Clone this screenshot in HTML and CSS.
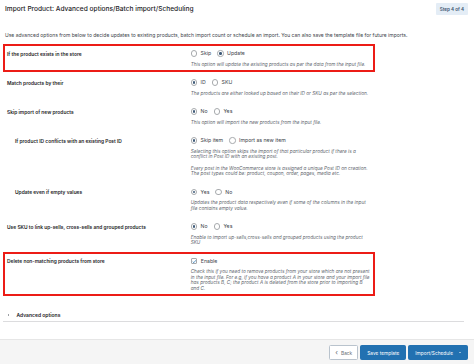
FILE: index.html
```html
<!DOCTYPE html>
<html lang="en">
<head>
  <meta charset="UTF-8">
  <meta name="viewport" content="width=device-width, initial-scale=1.0">
  <title>Import Product</title>
  <link rel="stylesheet" href="styles.css">
</head>
<body>
  <div class="page">
    <div class="head">
      <h1>Import Product: Advanced options/Batch import/Scheduling</h1>
      <span class="step">Step 4 of 4</span>
    </div>
    <p class="intro">Use advanced options from below to decide updates to existing products, batch import count or schedule an import. You can also save the template file for future imports.</p>

    <div class="row hl">
      <div class="label">If the product exists in the store</div>
      <div class="field">
        <div class="opts">
          <label><span class="radio"></span>Skip</label>
          <label><span class="radio on"></span>Update</label>
        </div>
        <p class="help">This option will update the existing products as per the data from the input file.</p>
      </div>
    </div>

    <div class="row">
      <div class="label">Match products by their</div>
      <div class="field">
        <div class="opts">
          <label><span class="radio on"></span>ID</label>
          <label><span class="radio"></span>SKU</label>
        </div>
        <p class="help">The products are either looked up based on their ID or SKU as per the selection.</p>
      </div>
    </div>

    <div class="row">
      <div class="label">Skip import of new products</div>
      <div class="field">
        <div class="opts">
          <label><span class="radio on"></span>No</label>
          <label><span class="radio"></span>Yes</label>
        </div>
        <p class="help">This option will import the new products from the input file.</p>
      </div>
    </div>

    <div class="row">
      <div class="label sub">If product ID conflicts with an existing Post ID</div>
      <div class="field">
        <div class="opts">
          <label><span class="radio on"></span>Skip item</label>
          <label><span class="radio"></span>Import as new item</label>
        </div>
        <p class="help">Selecting this option skips the import of that particular product if there is a conflict in Post ID with an existing post.</p>
        <p class="help">Every post in the WooCommerce store is assigned a unique Post ID on creation. The post types could be: product, coupon, order, pages, media etc.</p>
      </div>
    </div>

    <div class="row">
      <div class="label sub">Update even if empty values</div>
      <div class="field">
        <div class="opts">
          <label><span class="radio on"></span>Yes</label>
          <label><span class="radio"></span>No</label>
        </div>
        <p class="help">Updates the product data respectively even if some of the columns in the input file contains empty value.</p>
      </div>
    </div>

    <div class="row">
      <div class="label">Use SKU to link up-sells, cross-sells and grouped products</div>
      <div class="field">
        <div class="opts">
          <label><span class="radio on"></span>No</label>
          <label><span class="radio"></span>Yes</label>
        </div>
        <p class="help">Enable to import up-sells,cross-sells and grouped products using the product SKU</p>
      </div>
    </div>

    <div class="row hl">
      <div class="label">Delete non-matching products from store</div>
      <div class="field">
        <div class="opts">
          <label>
            <span class="check">
              <svg viewBox="0 0 10 10" width="5" height="5"><path d="M1.5 5.2 L4 7.6 L8.6 2.2" fill="none" stroke="#2271b1" stroke-width="1.6"/></svg>
            </span>Enable
          </label>
        </div>
        <p class="help">Check this if you need to remove products from your store which are not present in the input file. For e.g, if you have a product A in your store and your import file has products B, C; the product A is deleted from the store prior to importing B and C.</p>
      </div>
    </div>

    <div class="adv"><span class="caret"></span>Advanced options</div>
  </div>

  <div class="foot">
    <button class="btn back"><span class="chev">&lsaquo;</span> Back</button>
    <button class="btn blue">Save template</button>
    <button class="btn blue">Import/Schedule <span class="tri"></span></button>
  </div>
</body>
</html>
```

FILE: styles.css
```css
body {
  margin: 0;
  background: #fff;
  color: #1d2327;
  font-family: Inter, "Liberation Sans", sans-serif;
}
.page {
  padding: 3px 6px 0 3px;
}
.head {
  display: flex;
  justify-content: space-between;
  align-items: center;
  height: 12px;
  padding-left: 2px;
}
h1 {
  margin: 0;
  font-size: 6.6px;
  font-weight: 500;
}
.step {
  display: flex;
  align-items: center;
  height: 12px;
  padding: 0 4px;
  background: #e4edf6;
  color: #3c5670;
  font-size: 4.6px;
  font-weight: 600;
  border-radius: 1px;
}
.intro {
  margin: 17px 0 6px 2px;
  font-size: 5px;
  line-height: 6px;
  color: #3c434a;
}
.row {
  display: flex;
  width: 363px;
  padding: 3.5px 3px 3px 2px;
  border: 2px solid transparent;
  margin-bottom: 1px;
}
.row.hl {
  border-color: #ec1c16;
}
.label {
  width: 183.7px;
  flex: none;
  font-size: 4.9px;
  font-weight: 600;
  line-height: 8px;
}
.label.sub {
  padding-left: 8px;
  width: 175.7px;
}
.field {
  flex: 1;
  max-width: 182px;
}
.opts {
  display: flex;
  gap: 6px;
  height: 8px;
  align-items: center;
  font-size: 5.2px;
  color: #3c434a;
}
.opts label {
  display: flex;
  align-items: center;
  gap: 3.5px;
}
.radio {
  width: 4.4px;
  height: 4.4px;
  border: 0.6px solid #a7aaad;
  border-radius: 50%;
  display: flex;
  align-items: center;
  justify-content: center;
}
.radio.on::after {
  content: "";
  width: 2.4px;
  height: 2.4px;
  border-radius: 50%;
  background: #3e5a78;
}
.check {
  width: 4.6px;
  height: 4.6px;
  border: 0.6px solid #a7aaad;
  border-radius: 1px;
  display: flex;
  align-items: center;
  justify-content: center;
}
.help {
  margin: 4px 0 0;
  font-size: 4.7px;
  line-height: 5.5px;
  font-style: italic;
  color: #646970;
}
.help + .help {
  margin-top: 6px;
}
.adv {
  margin-top: 15px;
  width: 461px;
  display: flex;
  align-items: center;
  height: 8px;
  padding-bottom: 2px;
  border-bottom: 0.6px solid #dcdcde;
  font-size: 5px;
  font-weight: 600;
}
.caret {
  width: 0;
  height: 0;
  border-top: 1px solid transparent;
  border-bottom: 1px solid transparent;
  border-left: 1.5px solid #3c434a;
  margin: 0 8px 0 4.5px;
}
.foot {
  margin-top: 17px;
  background: #f5f5f5;
  border-top: 0.6px solid #e6e6e6;
  display: flex;
  justify-content: flex-end;
  gap: 2px;
  padding: 5px 6px 4px;
}
.btn {
  height: 15px;
  font-family: inherit;
  font-size: 4.8px;
  border-radius: 1.5px;
  padding: 0 6px;
  display: flex;
  align-items: center;
  gap: 3px;
}
.btn.back {
  background: #fff;
  border: 0.7px solid #b9c3cd;
  color: #646970;
  padding: 0 5px;
}
.chev {
  font-size: 7px;
  line-height: 1;
  margin-top: -1px;
}
.btn.blue {
  background: #2271b1;
  border: 0.7px solid #2271b1;
  color: #fff;
}
.tri {
  width: 0;
  height: 0;
  border-left: 1.3px solid transparent;
  border-right: 1.3px solid transparent;
  border-top: 1.6px solid #fff;
  margin-left: 3px;
}
```
